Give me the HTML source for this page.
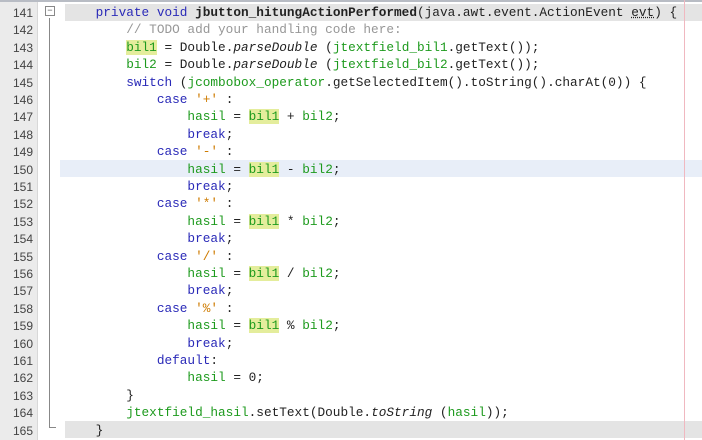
<!DOCTYPE html>
<html><head><meta charset="utf-8"><style>
body{margin:0;width:702px;height:440px;overflow:hidden;background:#fff;position:relative;font-family:"Liberation Mono",monospace;}
.top{position:absolute;left:0;top:0;width:702px;height:2px;background:#b8bcc4;}
.gut{position:absolute;left:0;top:2px;width:37px;height:438px;background:#ebebeb;border-right:1px solid #d8d8d8;}
.margin{position:absolute;left:684px;top:0;width:1px;height:440px;background:#f0b8c0;}
.fold{position:absolute;left:49px;top:18px;width:1px;height:410px;background:#888;}
.foldend{position:absolute;left:49px;top:427px;width:7px;height:1px;background:#888;}
.box{position:absolute;left:45px;top:6px;width:8px;height:8px;border:1px solid #888;background:#fff;font-size:9px;line-height:8px;text-align:center;color:#555;}
.hl{position:absolute;left:65px;width:637px;height:17px;}
.ln{position:absolute;left:0;width:33px;text-align:right;font-size:12px;color:#444;font-family:"Liberation Sans",sans-serif;}
.code{position:absolute;left:65px;white-space:pre;font-size:12.75px;color:#222;}
.k{color:#2a2ab8}.f{color:#1d9a1d}.s{color:#ce7b00}.c{color:#979797}.i{font-style:italic}
.m{background:#e4ed9c}
</style></head><body>
<div class="top"></div>
<div class="gut"></div>
<div class="hl" style="top:4px;background:#e4e4e4"></div>
<div class="hl" style="top:421px;background:#e4e4e4"></div>
<div class="hl" style="top:160px;left:60px;width:642px;background:#e8eef8"></div>
<div class="margin"></div>
<div class="fold"></div><div class="foldend"></div>
<div class="box">−</div>
<div id="L"></div>
<script>
var lines=[
'    <span class="k">private void</span> <b style="font-weight:bold">jbutton_hitungActionPerformed</b>(java.awt.event.ActionEvent <u style="text-decoration-style:dotted">evt</u>) {',
'        <span class="c">// TODO add your handling code here:</span>',
'        <span class="f m">bil1</span> = Double.<span class="i">parseDouble</span> (<span class="f">jtextfield_bil1</span>.getText());',
'        <span class="f">bil2</span> = Double.<span class="i">parseDouble</span> (<span class="f">jtextfield_bil2</span>.getText());',
'        <span class="k">switch</span> (<span class="f">jcombobox_operator</span>.getSelectedItem().toString().charAt(0)) {',
'            <span class="k">case</span> <span class="s">\'+\'</span> :',
'                <span class="f">hasil</span> = <span class="f m">bil1</span> + <span class="f">bil2</span>;',
'                <span class="k">break</span>;',
'            <span class="k">case</span> <span class="s">\'-\'</span> :',
'                <span class="f">hasil</span> = <span class="f m">bil1</span> - <span class="f">bil2</span>;',
'                <span class="k">break</span>;',
'            <span class="k">case</span> <span class="s">\'*\'</span> :',
'                <span class="f">hasil</span> = <span class="f m">bil1</span> * <span class="f">bil2</span>;',
'                <span class="k">break</span>;',
'            <span class="k">case</span> <span class="s">\'/\'</span> :',
'                <span class="f">hasil</span> = <span class="f m">bil1</span> / <span class="f">bil2</span>;',
'                <span class="k">break</span>;',
'            <span class="k">case</span> <span class="s">\'%\'</span> :',
'                <span class="f">hasil</span> = <span class="f m">bil1</span> % <span class="f">bil2</span>;',
'                <span class="k">break</span>;',
'            <span class="k">default</span>:',
'                <span class="f">hasil</span> = 0;',
'        }',
'        <span class="f">jtextfield_hasil</span>.setText(Double.<span class="i">toString</span> (<span class="f">hasil</span>));',
'    }'];
var h='';
for(var i=0;i<lines.length;i++){var t=4+i*17.4;
h+='<div class="ln" style="top:'+(t+1)+'px;line-height:16px">'+(141+i)+'</div>';
h+='<div class="code" style="top:'+t+'px;line-height:17px">'+lines[i]+'</div>';}
document.getElementById('L').innerHTML=h;
</script>
</body></html>
